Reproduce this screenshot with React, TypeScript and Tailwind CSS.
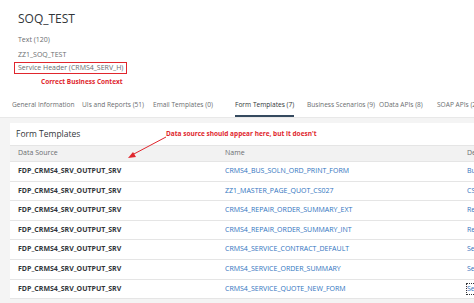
import React from 'react'

const tabs = [
  { label: 'General Information', w: 'w-[70px]' },
  { label: 'UIs and Reports (51)', w: 'w-[71px]' },
  { label: 'Email Templates (0)', w: 'w-[82px]' },
  { label: 'Form Templates (7)', w: 'w-[72px]', active: true },
  { label: 'Business Scenarios (9)', w: 'w-[72px]' },
  { label: 'OData APIs (8)', w: 'w-[58px]' },
  { label: 'SOAP APIs (2)', w: 'w-[60px]' },
]

const rows = [
  { name: 'CRMS4_BUS_SOLN_ORD_PRINT_FORM', desc: 'Business Solution Order' },
  { name: 'ZZ1_MASTER_PAGE_QUOT_CS027', desc: 'CS027 Master Page' },
  { name: 'CRMS4_REPAIR_ORDER_SUMMARY_EXT', desc: 'Repair Order Summary' },
  { name: 'CRMS4_REPAIR_ORDER_SUMMARY_INT', desc: 'Repair Order Summary' },
  { name: 'CRMS4_SERVICE_CONTRACT_DEFAULT', desc: 'Service Contract' },
  { name: 'CRMS4_SERVICE_ORDER_SUMMARY', desc: 'Service Order Summary' },
  { name: 'CRMS4_SERVICE_QUOTE_NEW_FORM', desc: 'Service Quotation', focus: true },
]

export default function App() {
  return (
    <div className="w-[474px] h-[303px] overflow-hidden bg-[#f4f4f4] text-[#32363a] font-['Open_Sans',sans-serif]">
      {/* object header */}
      <div className="bg-white px-[18px] pt-[10px] border-b border-[#e8e8e8]">
        <h1 className="text-[12px] leading-[18px] text-[#32363a]">SOQ_TEST</h1>
        <div className="mt-[8px] flex flex-col gap-[7px] text-[7px] leading-[8px] text-[#6a6d70]">
          <span>Text (120)</span>
          <span>ZZ1_SOQ_TEST</span>
        </div>
        <div className="mt-[3px] -ml-[4px] w-fit border-[1.5px] border-[#e0262d] px-[3px] py-[1px] text-[7px] leading-[8px] text-[#6a6d70]">
          Service Header (CRMS4_SERV_H)
        </div>
        <div className="pl-[23px] pt-[4px] text-[6.5px] leading-[8px] font-bold text-[#e0262d]">
          Correct Business Context
        </div>
        {/* tabs */}
        <div className="mt-[15px] -ml-[6px] flex whitespace-nowrap text-[6.6px] leading-[8px] text-[#6a6d70]">
          {tabs.map((t) => (
            <div key={t.label} className={`${t.w} shrink-0 flex flex-col`}>
              <span className={`pb-[6px] ${t.active ? 'text-[#32363a]' : ''}`}>{t.label}</span>
              <span className={`h-[2px] w-[59px] ${t.active ? 'bg-[#354a5f]' : ''}`} />
            </div>
          ))}
        </div>
      </div>

      {/* form templates card */}
      <div className="pt-[5px] pl-[10px]">
        <div className="relative bg-white">
          <div className="grid grid-cols-[150px_1fr] items-center h-[22px] pl-[6px] whitespace-nowrap">
            <span className="text-[8.5px] text-[#32363a]">Form Templates</span>
            <span className="text-[6.5px] font-bold text-[#e0262d]">Data source should appear here, but it doesn't</span>
          </div>
          <div className="grid grid-cols-[207px_242px_1fr] h-[17px] items-center bg-[#f2f2f2] border-y border-[#e5e5e5] text-[7px] text-[#6a6d70] whitespace-nowrap">
            <span className="pl-[8px]">Data Source</span>
            <span className="pl-[8px]">Name</span>
            <span className="pl-[8px]">Description</span>
          </div>
          {rows.map((r) => (
            <div key={r.name} className="grid grid-cols-[207px_242px_1fr] h-[19.6px] items-center border-b border-[#e5e5e5] text-[7px] whitespace-nowrap overflow-hidden">
              <span className="pl-[8px] font-bold text-[#32363a]">FDP_CRMS4_SRV_OUTPUT_SRV</span>
              <span className="pl-[8px] text-[#2f74c0]">{r.name}</span>
              <span className={`ml-[8px] text-[#2f74c0] ${r.focus ? 'outline outline-1 outline-dotted outline-[#32363a]' : ''}`}>{r.desc}</span>
            </div>
          ))}
          {/* annotation arrow */}
          <svg className="absolute left-[115px] top-[10px]" width="45" height="28" viewBox="0 0 45 28">
            <line x1="41" y1="4" x2="7" y2="22" stroke="#e0262d" strokeWidth="1" />
            <polygon points="3,25 8,19 11,24" fill="#e0262d" />
          </svg>
        </div>
      </div>
    </div>
  )
}
